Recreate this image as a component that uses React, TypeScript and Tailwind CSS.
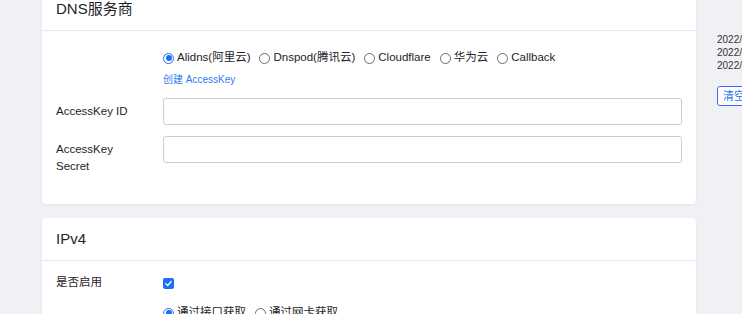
import React from 'react';

const providers = [
  { name: 'Alidns(阿里云)', checked: true },
  { name: 'Dnspod(腾讯云)', checked: false },
  { name: 'Cloudflare', checked: false },
  { name: '华为云', checked: false },
  { name: 'Callback', checked: false },
];

function Radio({ label, checked }: { label: string; checked?: boolean }) {
  return (
    <label className="flex items-center gap-[3px] mr-[9px]">
      {checked ? (
        <span className="w-[11px] h-[11px] rounded-full border border-[#1f6ff2] flex items-center justify-center">
          <span className="w-[6px] h-[6px] rounded-full bg-[#1f6ff2]" />
        </span>
      ) : (
        <span className="w-[11px] h-[11px] rounded-full border border-[#6b6b6b]" />
      )}
      <span>{label}</span>
    </label>
  );
}

function Card({ title, children }: { title: string; children: React.ReactNode }) {
  return (
    <div className="w-[654px] bg-white rounded-[4px] shadow-[0_1px_3px_rgba(0,0,0,0.06)]">
      <div className="h-[43px] px-[14px] flex items-center border-b border-[#e6e7ee] text-[15px] text-[#1f2329]">
        {title}
      </div>
      {children}
    </div>
  );
}

export default function App() {
  return (
    <div className="h-[314px] w-[742px] overflow-hidden bg-[#f0f1f5] flex text-[11.5px] text-[#1f2329] font-['Liberation_Sans','Noto_Sans_CJK_SC',sans-serif]">
      <div className="pl-[42px] -mt-[12px] flex flex-col gap-[14px] shrink-0">
        <Card title="DNS服务商">
          <div className="px-[14px] pt-[14px] pb-[29px]">
            <div className="flex">
              <div className="w-[107px] shrink-0" />
              <div>
                <div className="h-[26px] flex items-center">
                  {providers.map((p) => (
                    <Radio key={p.name} label={p.name} checked={p.checked} />
                  ))}
                </div>
                <a className="block mt-[2px] leading-[14px] text-[10px] text-[#2f7bf5]">创建 AccessKey</a>
              </div>
            </div>
            <div className="flex mt-[11px]">
              <div className="w-[107px] shrink-0 pt-[5px] leading-[17px] pr-[12px]">AccessKey ID</div>
              <input className="h-[27px] flex-1 border border-[#c9cdd6] rounded-[3px] outline-none" />
            </div>
            <div className="flex mt-[11px] items-start">
              <div className="w-[107px] shrink-0 pt-[5px] leading-[17px] pr-[30px]">AccessKey Secret</div>
              <input className="h-[27px] flex-1 border border-[#c9cdd6] rounded-[3px] outline-none" />
            </div>
          </div>
        </Card>
        <Card title="IPv4">
          <div className="px-[14px] pt-[12px]">
            <div className="flex items-center h-[20px]">
              <div className="w-[107px] shrink-0">是否启用</div>
              <span className="w-[11px] h-[11px] rounded-[2px] bg-[#1f6ff2] flex items-center justify-center">
                <svg viewBox="0 0 12 12" className="w-[9px] h-[9px]">
                  <path d="M2.5 6.2 L5 8.6 L9.6 3.4" fill="none" stroke="white" strokeWidth="1.8" strokeLinecap="round" strokeLinejoin="round" />
                </svg>
              </span>
            </div>
            <div className="flex items-center h-[26px] mt-[7px]">
              <div className="w-[107px] shrink-0" />
              <Radio label="通过接口获取" checked />
              <Radio label="通过网卡获取" />
            </div>
          </div>
        </Card>
      </div>
      <aside className="pl-[21px] pt-[33px] shrink-0 text-[10px] leading-[13px] text-[#333]">
        <div className="whitespace-nowrap">2022/03/05 10:21:33 IPv4地址未改变</div>
        <div className="whitespace-nowrap">2022/03/05 10:26:33 IPv4地址未改变</div>
        <div className="whitespace-nowrap">2022/03/05 10:31:33 IPv4地址未改变</div>
        <button className="mt-[14px] h-[20px] px-[5px] border border-[#2f6ff0] rounded-[3px] text-[11px] text-[#2f6ff0] bg-white">
          清空
        </button>
      </aside>
    </div>
  );
}
